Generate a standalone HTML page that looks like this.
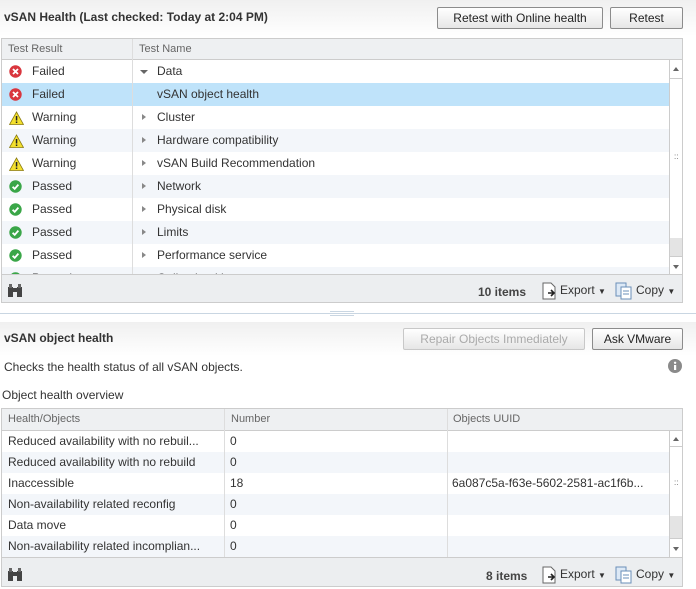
<!DOCTYPE html>
<html><head><meta charset="utf-8"><style>
*{box-sizing:border-box;margin:0;padding:0}
body{width:696px;height:589px;background:#fff;font-family:"Liberation Sans",sans-serif;font-size:12px;color:#333;position:relative;overflow:hidden}
.abs{position:absolute}
.hdr{left:0;width:696px;background:linear-gradient(#f0f0f0,#fff)}
.btn{position:absolute;border:1px solid #8c8c8c;background:linear-gradient(#fff,#e6e6e6);font-size:12px;color:#222;text-align:center;line-height:20px;border-radius:2px}
.grid{position:absolute;border:1px solid #ccc;background:#fff;overflow:hidden}
.gh{position:absolute;left:0;top:0;right:0;height:21px;background:#eef0f2;border-bottom:1px solid #ccc;font-size:11px;color:#666}
.gh span{position:absolute;top:4px}
.row{position:absolute;left:0;height:23px;line-height:23px}
.cell{position:absolute;top:0}
.vline{position:absolute;width:1px;background:#ddd}
.foot{position:absolute;background:#eceef0;border:1px solid #ccc}
.sb{position:absolute;background:#ececec;border-left:1px solid #ccc}
.tri{display:inline-block;width:0;height:0}
</style></head><body>
<div class="abs hdr" style="top:0;height:36px"></div>
<div class="abs" style="left:4px;top:10px;font-weight:bold;font-size:12px;color:#333">vSAN Health (Last checked: Today at 2:04 PM)</div>
<div class="btn" style="left:437px;top:7px;width:166px;height:22px">Retest with Online health</div>
<div class="btn" style="left:610px;top:7px;width:73px;height:22px">Retest</div>

<div class="grid" style="left:1px;top:38px;width:682px;height:237px">
<div class="gh"><span style="left:6px">Test Result</span><span style="left:137px">Test Name</span></div>
<div id="rows1"></div>
<div class="vline" style="left:130px;top:0;height:237px"></div>
<div class="sb" style="left:667px;top:21px;width:14px;height:216px;background:#fff">
 <div class="abs" style="left:0;top:0;width:13px;height:19px;border-bottom:1px solid #ccc;background:#fff"><div class="tri" style="position:absolute;left:3px;top:7px;border-left:3px solid transparent;border-right:3px solid transparent;border-bottom:4px solid #666"></div></div>
 <div class="abs" style="left:0;top:178px;width:13px;height:18px;background:#e4e4e4"></div>
 <div class="abs" style="left:0;top:196px;width:13px;height:20px;border-top:1px solid #ccc;background:#fff"><div class="tri" style="position:absolute;left:3px;top:8px;border-left:3px solid transparent;border-right:3px solid transparent;border-top:4px solid #666"></div></div>
 <div class="abs" style="left:4px;top:95px;font-size:8px;color:#666;line-height:4px">::</div>
</div>
</div>
<div class="foot" style="left:1px;top:274px;width:682px;height:29px"></div>

<div class="abs" style="left:0;top:313px;width:696px;height:1px;background:#c9d6e2"></div>
<div class="abs" style="left:330px;top:311px;width:24px;height:5px;border-top:1px solid #c9d6e2;border-bottom:1px solid #c9d6e2"></div>

<div class="abs hdr" style="top:322px;height:34px"></div>
<div class="abs" style="left:4px;top:331px;font-weight:bold;font-size:12px;color:#333">vSAN object health</div>
<div class="btn" style="left:403px;top:328px;width:182px;height:22px;color:#aaa;border-color:#c8c8c8">Repair Objects Immediately</div>
<div class="btn" style="left:592px;top:328px;width:91px;height:22px">Ask VMware</div>
<div class="abs" style="left:4px;top:360px;font-size:12px">Checks the health status of all vSAN objects.</div>
<svg class="abs" style="left:668px;top:359px" width="14" height="14"><circle cx="7" cy="7" r="7" fill="#8a8a8a"/><rect x="6" y="6" width="2.2" height="5" fill="#fff"/><circle cx="7.1" cy="3.8" r="1.2" fill="#fff"/></svg>
<div class="abs" style="left:2px;top:388px;font-size:12px">Object health overview</div>

<div class="grid" style="left:1px;top:408px;width:682px;height:150px">
<div class="gh" style="height:22px"><span style="left:6px">Health/Objects</span><span style="left:229px">Number</span><span style="left:451px">Objects UUID</span></div>
<div id="rows2"></div>
<div class="vline" style="left:222px;top:0;height:150px"></div>
<div class="vline" style="left:445px;top:0;height:150px"></div>
<div class="sb" style="left:667px;top:22px;width:14px;height:128px;background:#fff">
 <div class="abs" style="left:0;top:0;width:13px;height:16px;border-bottom:1px solid #ccc"><div class="tri" style="position:absolute;left:3px;top:6px;border-left:3px solid transparent;border-right:3px solid transparent;border-bottom:4px solid #666"></div></div>
 <div class="abs" style="left:0;top:85px;width:13px;height:22px;background:#e4e4e4"></div>
 <div class="abs" style="left:0;top:107px;width:13px;height:21px;border-top:1px solid #ccc"><div class="tri" style="position:absolute;left:3px;top:8px;border-left:3px solid transparent;border-right:3px solid transparent;border-top:4px solid #666"></div></div>
 <div class="abs" style="left:4px;top:50px;font-size:8px;color:#666;line-height:4px">::</div>
</div>
</div>
<div class="foot" style="left:1px;top:557px;width:682px;height:30px"></div>

<div id="foots"></div>
<script>
var ic={
F:'<svg width="13" height="13"><circle cx="6.5" cy="6.5" r="6.2" fill="#d9363e"/><path d="M4 4L9 9M9 4L4 9" stroke="#fff" stroke-width="1.8"/></svg>',
W:'<svg width="15" height="14"><path d="M7.5 1L14.5 13.5H0.5Z" fill="#f3e02d" stroke="#8a7a10" stroke-width="0.8"/><rect x="6.8" y="5" width="1.5" height="4.5" fill="#222"/><rect x="6.8" y="10.5" width="1.5" height="1.5" fill="#222"/></svg>',
P:'<svg width="13" height="13"><circle cx="6.5" cy="6.5" r="6.2" fill="#3aa648"/><path d="M3.6 6.8L5.7 8.8L9.4 4.6" stroke="#fff" stroke-width="1.8" fill="none"/></svg>'};
var d=[['F','Failed','Data',2],['F','Failed','vSAN object health',0],['W','Warning','Cluster',1],['W','Warning','Hardware compatibility',1],['W','Warning','vSAN Build Recommendation',1],['P','Passed','Network',1],['P','Passed','Physical disk',1],['P','Passed','Limits',1],['P','Passed','Performance service',1],['P','Passed','Online health',1]];
var h='';
d.forEach(function(r,i){var bg=i==1?'#bfe3fa':(i%2?'#f3f6fa':'#fff');
var t=r[3]==2?'<div class="tri" style="position:absolute;left:8px;top:10px;border-left:4px solid transparent;border-right:4px solid transparent;border-top:4px solid #666"></div>':r[3]==1?'<div class="tri" style="position:absolute;left:10px;top:8px;border-top:3.5px solid transparent;border-bottom:3.5px solid transparent;border-left:4px solid #888"></div>':'';
h+='<div class="row" style="top:'+(21+i*23)+'px;width:667px;background:'+bg+'"><div class="cell" style="left:7px;top:5px;line-height:0">'+ic[r[0]]+'</div><div class="cell" style="left:30px">'+r[1]+'</div><div class="cell" style="left:130px;width:300px;height:23px">'+t+'<span style="position:absolute;left:25px">'+r[2]+'</span></div></div>';});
document.getElementById('rows1').innerHTML=h;
var e=[['Reduced availability with no rebuil...','0',''],['Reduced availability with no rebuild','0',''],['Inaccessible','18','6a087c5a-f63e-5602-2581-ac1f6b...'],['Non-availability related reconfig','0',''],['Data move','0',''],['Non-availability related incomplian...','0','']];
h='';
e.forEach(function(r,i){h+='<div class="row" style="top:'+(22+i*21)+'px;height:21px;line-height:21px;width:667px;background:'+(i%2?'#f3f6fa':'#fff')+'"><div class="cell" style="left:6px">'+r[0]+'</div><div class="cell" style="left:228px">'+r[1]+'</div><div class="cell" style="left:450px">'+r[2]+'</div></div>';});
document.getElementById('rows2').innerHTML=h;
function foot(y,n){
return '<svg class="abs" style="left:7px;top:'+(y+4)+'px" width="16" height="14"><rect x="1" y="3" width="5" height="10" fill="#444"/><rect x="10" y="3" width="5" height="10" fill="#444"/><rect x="5" y="4" width="6" height="4" fill="#444"/><rect x="2" y="0" width="3" height="4" fill="#666"/><rect x="11" y="0" width="3" height="4" fill="#666"/></svg>'+
'<div class="abs" style="left:'+(n==10?478:486)+'px;top:'+(y+5)+'px;font-weight:bold;color:#444">'+n+' items</div>'+
'<svg class="abs" style="left:541px;top:'+(y+2)+'px" width="18" height="18"><path d="M2 1H10L14 5V17H2Z" fill="#fff" stroke="#666"/><path d="M7 11H13M10 8L13 11L10 14" stroke="#222" stroke-width="1.6" fill="none"/></svg>'+
'<div class="abs" style="left:560px;top:'+(y+3)+'px;font-size:12px">Export <span style="font-size:8px">▼</span></div>'+
'<svg class="abs" style="left:615px;top:'+(y+2)+'px" width="18" height="18"><rect x="1" y="1" width="10" height="13" fill="#dde9f6" stroke="#6a8fb8"/><rect x="6" y="5" width="10" height="12" fill="#fff" stroke="#6a8fb8"/><path d="M8 9H14M8 12H14" stroke="#6a8fb8"/></svg>'+
'<div class="abs" style="left:636px;top:'+(y+3)+'px;font-size:12px">Copy <span style="font-size:8px">▼</span></div>';}
document.getElementById('foots').innerHTML=foot(280,10)+foot(564,8);
</script>
</body></html>
